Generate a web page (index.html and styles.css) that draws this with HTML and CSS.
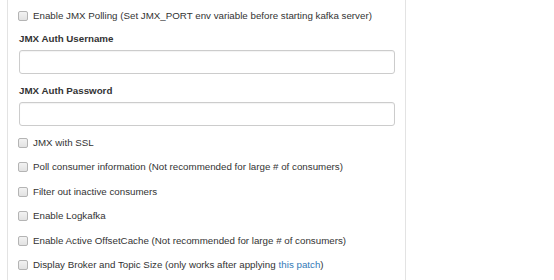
FILE: index.html
```html
<!DOCTYPE html>
<html lang="en">
<head>
    <meta charset="UTF-8">
    <title>Cluster settings</title>
    <link rel="stylesheet" href="styles.css">
</head>
<body>
    <div class="panel">
        <label class="check"><input type="checkbox"> Enable JMX Polling (Set JMX_PORT env variable before starting kafka server)</label>

        <div class="field">
            <label class="field_label">JMX Auth Username</label>
            <input class="field_input" type="text">
        </div>
        <div class="field">
            <label class="field_label">JMX Auth Password</label>
            <input class="field_input" type="password">
        </div>

        <label class="check"><input type="checkbox"> JMX with SSL</label>
        <label class="check"><input type="checkbox"> Poll consumer information (Not recommended for large # of consumers)</label>
        <label class="check"><input type="checkbox"> Filter out inactive consumers</label>
        <label class="check"><input type="checkbox"> Enable Logkafka</label>
        <label class="check"><input type="checkbox"> Enable Active OffsetCache (Not recommended for large # of consumers)</label>
        <label class="check"><input type="checkbox"> Display Broker and Topic Size (only works after applying <a href="#">this patch</a>)</label>
    </div>
</body>
</html>
```

FILE: styles.css
```css
body{
    margin: 0;
    background: #fff;
    font-family: "Liberation Sans", Arial, sans-serif;
    font-size: 9.75px;
    color: #333;
}
.panel{
    box-sizing: border-box;
    width: 399px;
    height: 280px;
    margin-left: 7px;
    padding: 4px 11px 0 11px;
    border-left: 1px solid #e3e3e3;
    border-right: 1px solid #e3e3e3;
    overflow: hidden;
}
.check{
    display: flex;
    align-items: center;
    height: 24.4px;
    line-height: 14px;
    white-space: nowrap;
}
.check input{
    appearance: none;
    -webkit-appearance: none;
    box-sizing: border-box;
    flex: none;
    width: 10px;
    height: 10px;
    margin: 0 5px 0 -1px;
    border: 1px solid #b4b4b4;
    border-radius: 2px;
    background: linear-gradient(#f2f2f2, #e2e2e2);
}
.check a{
    color: #337ab7;
    text-decoration: none;
    margin-left: 3px;
}
.field{
    padding-top: 3.5px;
}
.field + .field{
    padding-top: 10px;
}
.field_label{
    display: block;
    font-weight: bold;
    line-height: 14px;
    margin-bottom: 4px;
}
.field_input{
    display: block;
    box-sizing: border-box;
    width: 376px;
    height: 24px;
    margin: 0;
    border: 1px solid #ccc;
    border-radius: 3px;
    box-shadow: inset 0 1px 1px rgba(0,0,0,.05);
}
.field:last-of-type{
    margin-bottom: 5px;
}
```
